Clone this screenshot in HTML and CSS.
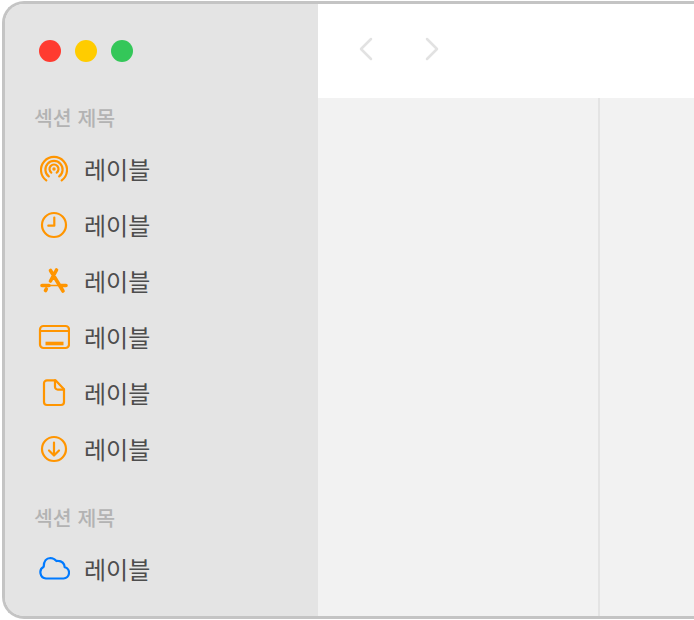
FILE: index.html
```html
<!DOCTYPE html>
<html lang="ko">
<head>
<meta charset="utf-8">
<title>창</title>
<link rel="stylesheet" href="styles.css">
</head>
<body>
<div class="window">
  <aside class="sidebar">
    <div class="traffic">
      <span class="dot red"></span><span class="dot yellow"></span><span class="dot green"></span>
    </div>
    <h2 class="section">섹션 제목</h2>
    <ul class="list">
      <li class="row">
        <svg class="icon orange" viewBox="0 0 32 32"><path d="M8.300 27.400a13 13 0 1 1 15.400 0"/><path d="M10.800 23.400a8.600 8.600 0 1 1 10.400 0"/><path d="M13.300 19.600a4.500 4.500 0 1 1 5.400 0"/><circle class="fill" cx="16" cy="16" r="1.700"/></svg>
        <span class="label">레이블</span>
      </li>
      <li class="row">
        <svg class="icon orange" viewBox="0 0 32 32"><circle cx="16" cy="16" r="12"/><path d="M16.300 8.500v8.200h-6"/></svg>
        <span class="label">레이블</span>
      </li>
      <li class="row">
        <svg class="icon orange" viewBox="0 0 32 32"><path class="thick" d="M12.500 5.500l12.500 20.500M18.500 5L12.500 16M4 20.500h7M21.500 20.500h6.500M7.500 25.500l.8-1.400"/><path class="thin" d="M10 20.500h12"/></svg>
        <span class="label">레이블</span>
      </li>
      <li class="row">
        <svg class="icon orange" viewBox="0 0 32 32"><rect x="2" y="5" width="29" height="22" rx="3.500"/><path d="M2 10h29"/><path class="bar" d="M7.500 22.500h18"/></svg>
        <span class="label">레이블</span>
      </li>
      <li class="row">
        <svg class="icon orange" viewBox="0 0 32 32"><path d="M9 3.300h8.500l8.500 9V25a3 3 0 0 1-3 3H9a3 3 0 0 1-3-3V6.300a3 3 0 0 1 3-3z"/><path d="M17 3.300v6.500a2.800 2.800 0 0 0 2.800 2.800H26"/></svg>
        <span class="label">레이블</span>
      </li>
      <li class="row">
        <svg class="icon orange" viewBox="0 0 32 32"><circle cx="16" cy="16" r="12"/><path d="M16 9.500v12.500M11 17.500l5 5 5-5"/></svg>
        <span class="label">레이블</span>
      </li>
    </ul>
    <h2 class="section second">섹션 제목</h2>
    <ul class="list">
      <li class="row">
        <svg class="icon blue" viewBox="0 0 32 32"><path d="M8 25.500h17.500a5.800 5.800 0 0 0 1.200-11.400 6.500 6.500 0 0 0-6.500-6.300 4 4 0 0 0-1.700.3A8.300 8.300 0 0 0 12.300 5c-3.800 0-6.500 3.200-6.600 8.700A6.300 6.300 0 0 0 8 25.500z"/></svg>
        <span class="label">레이블</span>
      </li>
    </ul>
  </aside>
  <main class="main">
    <header class="toolbar">
      <svg class="chev" viewBox="0 0 16 24"><path d="M13 2L3 12l10 10"/></svg>
      <svg class="chev" viewBox="0 0 16 24"><path d="M3 2l10 10L3 22"/></svg>
    </header>
    <div class="content">
      <div class="pane first"></div>
      <div class="pane"></div>
    </div>
  </main>
</div>
</body>
</html>
```
FILE: styles.css
```css
* { box-sizing: border-box; }
html, body { margin: 0; height: 100%; background: #fff; }
body { padding: 1px 0 1px 2px; overflow: hidden; font-family: "Noto Sans CJK KR", "Noto Sans", sans-serif; }
.window {
  display: flex;
  height: 618px;
  width: 692px;
  border: 3px solid #c4c4c4;
  border-right: 0;
  border-radius: 22px 0 0 22px;
  overflow: hidden;
  background: #f2f2f2;
}
.sidebar { width: 313px; flex: none; background: #e4e4e4; padding: 36px 0 0 29px; }
.traffic { display: flex; gap: 14px; padding-left: 5px; }
.dot { width: 22px; height: 22px; border-radius: 50%; }
.red { background: #ff3b30; }
.yellow { background: #ffcc00; }
.green { background: #34c759; }
.section { margin: 40px 0 0; height: 30px; font-size: 20.500px; line-height: 30px; font-weight: 500; color: #b3b3b3; }
.section.second { margin-top: 25px; }
.list { list-style: none; margin: 9px 0 0; padding: 0; }
.row { display: flex; align-items: center; height: 56px; gap: 14px; padding-left: 4px; }
.label { font-size: 24px; color: #4d4d4d; line-height: 32px; }
.icon { width: 32px; height: 32px; flex: none; fill: none; stroke-width: 2.200; stroke-linecap: round; stroke-linejoin: round; }
.orange { stroke: #ff9500; }
.blue { stroke: #007aff; }
.fill { fill: #ff9500; stroke: none; }
.thick { stroke-width: 3.600; }
.thin { stroke-width: 1.600; }
.bar { stroke-width: 3.600; stroke-linecap: butt; }
.main { flex: 1; display: flex; flex-direction: column; }
.toolbar { height: 94px; flex: none; background: #fff; display: flex; align-items: center; gap: 50px; padding: 0 0 4px 40px; }
.chev { width: 16px; height: 24px; fill: none; stroke: #e2e2e2; stroke-width: 2.500; stroke-linecap: round; stroke-linejoin: round; }
.content { flex: 1; display: flex; }
.pane.first { width: 282px; border-right: 2px solid #e4e4e4; }
```
